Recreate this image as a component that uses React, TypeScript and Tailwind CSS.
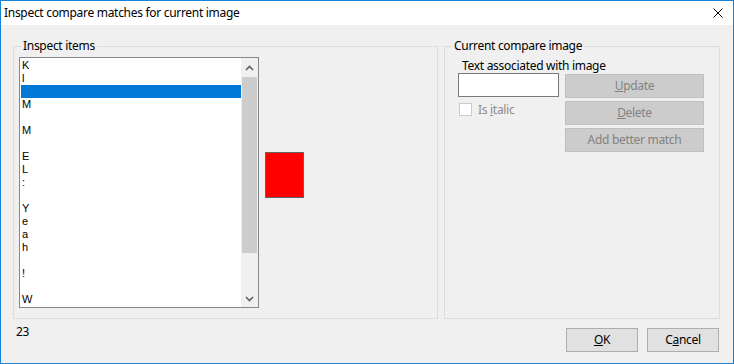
const ITEMS = ['K', 'l', '', 'M', '', 'M', '', 'E', 'L', ':', '', 'Y', 'e', 'a', 'h', '', '!', '', 'W'];
const SELECTED = 2;

const ui = { fontFamily: '"Noto Sans", "Open Sans", sans-serif' };
const ms = { fontFamily: '"Liberation Sans", Arial, sans-serif' };

function Chevron({ up }: { up?: boolean }) {
  return (
    <svg width="9" height="6" viewBox="0 0 9 6">
      <path d={up ? 'M1 5 L4.5 1.5 L8 5' : 'M1 1 L4.5 4.5 L8 1'} fill="none" stroke="#606060" strokeWidth="1.6" />
    </svg>
  );
}

function Group({ label, className, children }: { label: string; className: string; children: React.ReactNode }) {
  return (
    <div className={`relative border border-[#dcdcdc] ${className}`}>
      <span className="absolute left-[7px] -top-[9px] bg-[#f0f0f0] px-[2px] text-[12px] leading-[16px] text-black">{label}</span>
      {children}
    </div>
  );
}

function Button({ children, disabled, className }: { children: React.ReactNode; disabled?: boolean; className: string }) {
  return (
    <div
      className={`flex items-center justify-center text-[12px] ${
        disabled ? 'bg-[#cccccc] border border-[#bfbfbf] text-[#838383]' : 'bg-[#e1e1e1] border border-[#adadad] text-black'
      } ${className}`}
    >
      {children}
    </div>
  );
}

export default function App() {
  return (
    <div className="w-[734px] h-[364px] border border-[#1883d7] bg-[#f0f0f0] flex flex-col tracking-[-0.3px]" style={ui}>
      <div className="h-[24px] bg-white flex items-center justify-between pl-[3px] pr-[10px]">
        <span className="text-[12px] text-black">Inspect compare matches for current image</span>
        <svg width="10" height="10" viewBox="0 0 10 10">
          <path d="M0.5 0.5 L9.5 9.5 M9.5 0.5 L0.5 9.5" stroke="#000" strokeWidth="1" />
        </svg>
      </div>

      <div className="flex mt-[21px] ml-[12px] gap-[6px]">
        <Group label="Inspect items" className="w-[425px] h-[273px]">
          <div className="flex items-start gap-[6px] pl-[5px] pt-[10px]">
            <div className="w-[240px] h-[251px] border border-[#828790] bg-white flex">
              <div className="flex-1 pt-[1px] pl-[1px] tracking-normal" style={ms}>
                {ITEMS.map((t, i) => (
                  <div
                    key={i}
                    className={`h-[13px] leading-[13px] text-[11px] pl-[1px] ${i === SELECTED ? 'bg-[#0078d7] text-white' : 'text-black'}`}
                  >
                    {t}
                  </div>
                ))}
              </div>
              <div className="w-[17px] bg-[#f0f0f0] flex flex-col">
                <div className="h-[19px] flex items-center justify-center">
                  <Chevron up />
                </div>
                <div className="mx-[1px] h-[176px] bg-[#cdcdcd]" />
                <div className="flex-1" />
                <div className="h-[17px] flex items-center justify-center">
                  <Chevron />
                </div>
              </div>
            </div>
            <div className="mt-[95px] w-[39px] h-[46px] border border-[#646464] bg-[#ff0000]" />
          </div>
        </Group>

        <Group label="Current compare image" className="w-[276px] h-[273px]">
          <div className="pt-[12px] pl-[13px]">
            <div className="pl-[4px] h-[14px] leading-[14px] text-[12px] text-black">Text associated with image</div>
            <div className="flex">
              <div className="flex flex-col">
                <div className="w-[101px] h-[24px] border border-[#7a7a7a] bg-white" />
                <div className="flex items-center mt-[6px] ml-[1px] gap-[6px]">
                  <div className="w-[13px] h-[13px] border border-[#cccccc] bg-white" />
                  <span className="text-[12px] text-[#8c8c8c] leading-[13px]">
                    Is <u>i</u>talic
                  </span>
                </div>
              </div>
              <div className="flex flex-col gap-[3px] ml-[6px] mt-[1px]">
                <Button disabled className="w-[139px] h-[24px]">
                  <span><u>U</u>pdate</span>
                </Button>
                <Button disabled className="w-[139px] h-[24px]">
                  <span><u>D</u>elete</span>
                </Button>
                <Button disabled className="w-[139px] h-[24px]">
                  Add better match
                </Button>
              </div>
            </div>
          </div>
        </Group>
      </div>

      <div className="flex items-start mt-[6px] pr-[14px]">
        <span className="pl-[15px] text-[12px] leading-[14px] text-black">23</span>
        <div className="flex-1" />
        <div className="flex gap-[9px] mt-[3px]">
          <Button className="w-[72px] h-[24px]">
            <span><u>O</u>K</span>
          </Button>
          <Button className="w-[72px] h-[24px]">
            <span>C<u>a</u>ncel</span>
          </Button>
        </div>
      </div>
    </div>
  );
}
